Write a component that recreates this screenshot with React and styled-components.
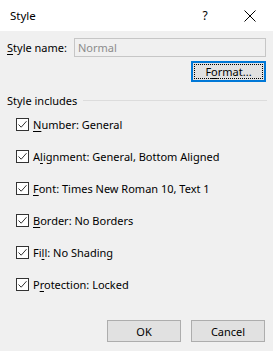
import React from "react";
import styled, { createGlobalStyle } from "styled-components";

const Global = createGlobalStyle`
  body {
    margin: 0;
    background: #f0f0f0;
  }
  * { box-sizing: border-box; }
`;

const Window = styled.div`
  width: 273px;
  height: 351px;
  background: #f0f0f0;
  font-family: "Noto Sans", "Open Sans", sans-serif;
  font-size: 11px;
  color: #000;
  display: flex;
  flex-direction: column;
`;

const TitleBar = styled.div`
  height: 31px;
  background: #fff;
  display: flex;
  align-items: center;
  padding-left: 10px;
`;

const Title = styled.div`
  flex: 1;
  font-size: 11.5px;
`;

const TitleButton = styled.div`
  width: ${(p) => p.w}px;
  height: 31px;
  display: flex;
  align-items: center;
  justify-content: center;
  font-size: 12px;
`;

const Body = styled.div`
  flex: 1;
  display: flex;
  flex-direction: column;
  padding: 7px 7px 9px 7px;
`;

const NameRow = styled.div`
  display: flex;
  align-items: center;
  justify-content: space-between;
`;

const Input = styled.div`
  flex-shrink: 0;
  width: 192px;
  height: 19px;
  border: 1px solid #c6c6c6;
  background: #f0f0f0;
  color: #8c8c8c;
  padding-left: 3px;
  display: flex;
  align-items: center;
`;

const FormatRow = styled.div`
  display: flex;
  justify-content: flex-end;
  margin-top: 4px;
`;

const Button = styled.div`
  width: ${(p) => p.w || 74}px;
  height: ${(p) => p.h || 22}px;
  background: #e1e1e1;
  border: ${(p) => (p.focused ? "2px solid #0078d7" : "1px solid #adadad")};
  display: flex;
  align-items: center;
  justify-content: center;
  padding: 1px;
`;

const FocusRing = styled.div`
  width: 100%;
  height: 100%;
  border: 1px dotted #000;
  display: flex;
  align-items: center;
  justify-content: center;
`;

const GroupHeader = styled.div`
  display: flex;
  align-items: center;
  gap: 6px;
  margin-top: 10px;
  height: 16px;
`;

const Rule = styled.div`
  flex: 1;
  height: 1px;
  background: #dcdcdc;
  margin-right: -1px;
`;

const CheckList = styled.div`
  display: flex;
  flex-direction: column;
  padding-left: 9px;
`;

const CheckRow = styled.div`
  height: 32px;
  display: flex;
  align-items: center;
  gap: 4px;
`;

const Box = styled.div`
  width: 13px;
  height: 13px;
  border: 1px solid #333;
  background: #fff;
  display: flex;
  align-items: center;
  justify-content: center;
`;

const Footer = styled.div`
  margin-top: auto;
  display: flex;
  justify-content: flex-end;
  gap: 10px;
  padding-right: 1px;
`;

const U = styled.span`
  text-decoration: underline;
  text-underline-offset: 2px;
`;

const Check = () => (
  <Box>
    <svg width="11" height="11" viewBox="0 0 11 11">
      <path d="M1.5 5.5 L4.2 8.2 L9.5 2.2" fill="none" stroke="#333" strokeWidth="1" />
    </svg>
  </Box>
);

const items = [
  ["", "N", "umber: General"],
  ["A", "l", "ignment: General, Bottom Aligned"],
  ["", "F", "ont: Times New Roman 10, Text 1"],
  ["", "B", "order: No Borders"],
  ["Fi", "l", "l: No Shading"],
  ["P", "r", "otection: Locked"],
];

export default function App() {
  return (
    <Window>
      <Global />
      <TitleBar>
        <Title>Style</Title>
        <TitleButton w={44}>?</TitleButton>
        <TitleButton w={46}>
          <svg width="12" height="12" viewBox="0 0 12 12">
            <path d="M0.5 0.5 L11.5 11.5 M11.5 0.5 L0.5 11.5" stroke="#000" strokeWidth="1" />
          </svg>
        </TitleButton>
      </TitleBar>
      <Body>
        <NameRow>
          <span>
            <U>S</U>tyle name:
          </span>
          <Input>Normal</Input>
        </NameRow>
        <FormatRow>
          <Button focused w={75} h={21}>
            <FocusRing>
              F<U>o</U>rmat...
            </FocusRing>
          </Button>
        </FormatRow>
        <GroupHeader>
          <span>Style includes</span>
          <Rule />
        </GroupHeader>
        <CheckList>
          {items.map(([a, k, b]) => (
            <CheckRow key={b}>
              <Check />
              <span>
                {a}
                <U>{k}</U>
                {b}
              </span>
            </CheckRow>
          ))}
        </CheckList>
        <Footer>
          <Button>OK</Button>
          <Button>Cancel</Button>
        </Footer>
      </Body>
    </Window>
  );
}
